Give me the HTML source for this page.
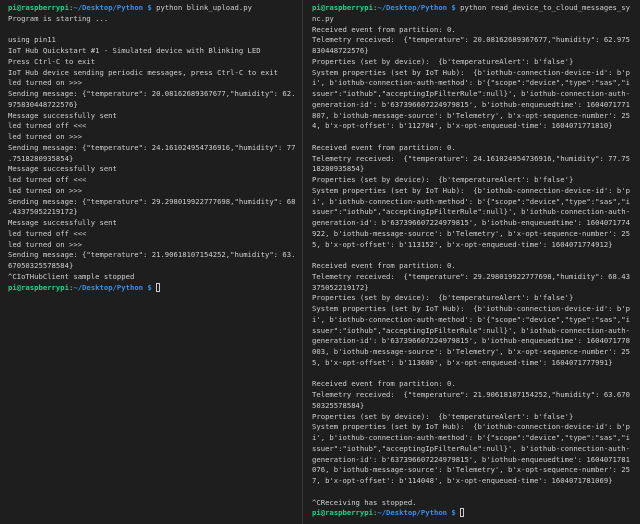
<!DOCTYPE html>
<html><head><meta charset="utf-8"><style>
html,body{margin:0;padding:0;background:#1e1e1e;width:640px;height:524px;overflow:hidden}
.p{position:absolute;top:3px;font-family:"DejaVu Sans Mono","Liberation Mono",monospace;font-size:7.24px;line-height:10.75px;color:#d0d0d0;white-space:pre}
#l{left:8px}
#r{left:312px}
.div{position:absolute;left:302px;top:0;width:1px;height:524px;background:#3a3a3a}
.g{color:#23d18b;font-weight:bold}
.b{color:#3b8eea;font-weight:bold}
.c{display:inline-block;width:4px;height:9px;border:1px solid #ccc;vertical-align:-2px;box-sizing:border-box}
</style></head><body>
<div class="div"></div>
<div class="p" id="l"><span class="g">pi@raspberrypi</span>:<span class="b">~/Desktop/Python $</span> python blink_upload.py
Program is starting ...

using pin11
IoT Hub Quickstart #1 - Simulated device with Blinking LED
Press Ctrl-C to exit
IoT Hub device sending periodic messages, press Ctrl-C to exit
led turned on &gt;&gt;&gt;
Sending message: {"temperature": 20.08162689367677,"humidity": 62.
975830448722576}
Message successfully sent
led turned off &lt;&lt;&lt;
led turned on &gt;&gt;&gt;
Sending message: {"temperature": 24.161024954736916,"humidity": 77
.7518280935854}
Message successfully sent
led turned off &lt;&lt;&lt;
led turned on &gt;&gt;&gt;
Sending message: {"temperature": 29.298019922777698,"humidity": 68
.43375052219172}
Message successfully sent
led turned off &lt;&lt;&lt;
led turned on &gt;&gt;&gt;
Sending message: {"temperature": 21.90618107154252,"humidity": 63.
67050325578584}
^CIoTHubClient sample stopped
<span class="g">pi@raspberrypi</span>:<span class="b">~/Desktop/Python $</span> <span class="c"></span></div>
<div class="p" id="r"><span class="g">pi@raspberrypi</span>:<span class="b">~/Desktop/Python $</span> python read_device_to_cloud_messages_sy
nc.py
Received event from partition: 0.
Telemetry received:  {"temperature": 20.08162689367677,"humidity": 62.975
830448722576}
Properties (set by device):  {b'temperatureAlert': b'false'}
System properties (set by IoT Hub):  {b'iothub-connection-device-id': b'p
i', b'iothub-connection-auth-method': b'{"scope":"device","type":"sas","i
ssuer":"iothub","acceptingIpFilterRule":null}', b'iothub-connection-auth-
generation-id': b'637396607224979815', b'iothub-enqueuedtime': 1604071771
807, b'iothub-message-source': b'Telemetry', b'x-opt-sequence-number': 25
4, b'x-opt-offset': b'112704', b'x-opt-enqueued-time': 1604071771810}

Received event from partition: 0.
Telemetry received:  {"temperature": 24.161024954736916,"humidity": 77.75
18280935854}
Properties (set by device):  {b'temperatureAlert': b'false'}
System properties (set by IoT Hub):  {b'iothub-connection-device-id': b'p
i', b'iothub-connection-auth-method': b'{"scope":"device","type":"sas","i
ssuer":"iothub","acceptingIpFilterRule":null}', b'iothub-connection-auth-
generation-id': b'637396607224979815', b'iothub-enqueuedtime': 1604071774
922, b'iothub-message-source': b'Telemetry', b'x-opt-sequence-number': 25
5, b'x-opt-offset': b'113152', b'x-opt-enqueued-time': 1604071774912}

Received event from partition: 0.
Telemetry received:  {"temperature": 29.298019922777698,"humidity": 68.43
375052219172}
Properties (set by device):  {b'temperatureAlert': b'false'}
System properties (set by IoT Hub):  {b'iothub-connection-device-id': b'p
i', b'iothub-connection-auth-method': b'{"scope":"device","type":"sas","i
ssuer":"iothub","acceptingIpFilterRule":null}', b'iothub-connection-auth-
generation-id': b'637396607224979815', b'iothub-enqueuedtime': 1604071778
003, b'iothub-message-source': b'Telemetry', b'x-opt-sequence-number': 25
5, b'x-opt-offset': b'113600', b'x-opt-enqueued-time': 1604071777991}

Received event from partition: 0.
Telemetry received:  {"temperature": 21.90618107154252,"humidity": 63.670
50325578584}
Properties (set by device):  {b'temperatureAlert': b'false'}
System properties (set by IoT Hub):  {b'iothub-connection-device-id': b'p
i', b'iothub-connection-auth-method': b'{"scope":"device","type":"sas","i
ssuer":"iothub","acceptingIpFilterRule":null}', b'iothub-connection-auth-
generation-id': b'637396607224979815', b'iothub-enqueuedtime': 1604071781
076, b'iothub-message-source': b'Telemetry', b'x-opt-sequence-number': 25
7, b'x-opt-offset': b'114048', b'x-opt-enqueued-time': 1604071781069}

^CReceiving has stopped.
<span class="g">pi@raspberrypi</span>:<span class="b">~/Desktop/Python $</span> <span class="c"></span></div>
</body></html>
